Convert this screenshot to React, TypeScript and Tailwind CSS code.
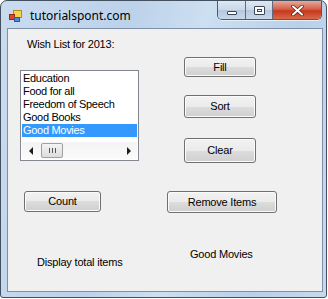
const wishes = ["Education", "Food for all", "Freedom of Speech", "Good Books", "Good Movies"];
const selected = "Good Movies";

const FormIcon = () => (
  <svg width={13} height={12} viewBox="0 0 13 12" aria-hidden="true">
    <rect x="4.5" y="0.5" width="8" height="7" fill="#f6d44a" stroke="#b88a1a" />
    <rect x="0.5" y="4.5" width="5" height="5" fill="#e0452c" stroke="#9a2a18" />
    <rect x="5.5" y="7.5" width="5" height="4" fill="#4f86d6" stroke="#2c5a9e" />
  </svg>
);

const CaptionButtons = () => (
  <div className="flex h-[19px] overflow-hidden rounded-b-[5px] border border-t-0 border-[#4b5a6e] shadow-[0_1px_0_#e6eef8]">
    <div className="flex w-[28px] items-center justify-center border-r border-[#5d6c80] bg-[linear-gradient(to_bottom,#dfe8f3_0%,#c9d7e8_50%,#b5c7dd_50%,#c8d8ea_100%)]">
      <span className="mt-[5px] h-[4px] w-[10px] rounded-[1px] border border-[#3a4556] bg-white" />
    </div>
    <div className="flex w-[27px] items-center justify-center border-r border-[#5d6c80] bg-[linear-gradient(to_bottom,#dfe8f3_0%,#c9d7e8_50%,#b5c7dd_50%,#c8d8ea_100%)]">
      <span className="flex h-[9px] w-[11px] items-center justify-center rounded-[1px] border border-[#3a4556] bg-white">
        <span className="h-[3px] w-[5px] border border-[#3a4556]" />
      </span>
    </div>
    <div className="flex w-[48px] items-center justify-center bg-[linear-gradient(to_bottom,#e9a99a_0%,#d7604a_45%,#c7381c_55%,#d9694a_100%)]">
      <svg width={13} height={11} viewBox="0 0 13 11" aria-hidden="true">
        <path d="M2 1.5l9 8M11 1.5l-9 8" stroke="#5a1d10" strokeWidth={3.4} strokeLinecap="round" />
        <path d="M2 1.5l9 8M11 1.5l-9 8" stroke="#ffffff" strokeWidth={2} strokeLinecap="round" />
      </svg>
    </div>
  </div>
);

const WinButton = ({ label, className }: { label: string; className: string }) => (
  <button
    type="button"
    className={`flex items-center justify-center rounded-[3px] border border-[#707070] bg-[linear-gradient(to_bottom,#f2f2f2_0%,#ebebeb_50%,#dddddd_50%,#cfcfcf_100%)] text-[11px] tracking-[-0.2px] text-black shadow-[inset_0_0_0_1px_#fbfbfb] ${className}`}
  >
    {label}
  </button>
);

const ListBox = () => (
  <div className="flex h-[91px] w-[119px] flex-col border border-[#828790] bg-white p-[1px]">
    <div className="flex flex-col">
      {wishes.map((w) => (
        <div
          key={w}
          className={`h-[13px] whitespace-nowrap pl-[1px] text-[11px] leading-[13px] tracking-[-0.3px] ${
            w === selected ? "bg-[#3399ff] text-white" : "text-black"
          }`}
        >
          {w}
        </div>
      ))}
    </div>
    <div className="mt-auto flex h-[17px] items-center bg-[linear-gradient(to_bottom,#f3f3f3,#fbfbfb)]">
      <div className="flex h-[17px] w-[17px] items-center justify-center">
        <span className="h-0 w-0 border-y-[4px] border-r-[4px] border-y-transparent border-r-[#1e1e1e]" />
      </div>
      <div className="ml-[2px] flex h-[15px] w-[22px] items-center justify-center gap-[2px] rounded-[2px] border border-[#a0a0a0] bg-[linear-gradient(to_bottom,#f4f4f4,#dcdcdc)]">
        <span className="h-[5px] w-px bg-[#555]" />
        <span className="h-[5px] w-px bg-[#555]" />
        <span className="h-[5px] w-px bg-[#555]" />
      </div>
      <div className="ml-auto flex h-[17px] w-[17px] items-center justify-center">
        <span className="h-0 w-0 border-y-[4px] border-l-[4px] border-y-transparent border-l-[#1e1e1e]" />
      </div>
    </div>
  </div>
);

export default function App() {
  return (
    <div className="h-[299px] w-[328px] bg-white font-['Liberation_Sans',Arial,sans-serif]">
      <div className="flex h-[298px] w-[327px] flex-col rounded-t-[7px] rounded-b-[3px] border border-[#43505f] bg-[linear-gradient(100deg,#c9dbef_0%,#bcd2ea_35%,#cddff1_55%,#b9d0e9_80%,#c6d9ee_100%)]">
        <div className="flex h-[27px] items-start">
          <div className="flex items-center gap-[8px] pl-[8px] pt-[7px]">
            <FormIcon />
            <span className="font-['Noto_Sans',sans-serif] text-[12px] leading-[16px] text-black">tutorialspont.com</span>
          </div>
          <div className="ml-auto mr-[4px]">
            <CaptionButtons />
          </div>
        </div>

        <div className="ml-[6px] h-[264px] w-[316px] border border-[#7d90a8] bg-[#f0f0f0] text-black">
          <div className="flex h-[135px]">
            <div className="flex w-[176px] flex-col pl-[12px] pt-[9px]">
              <div className="pl-[7px] text-[11px] leading-[13px] tracking-[-0.2px]">Wish List for 2013:</div>
              <div className="mt-[19px]">
                <ListBox />
              </div>
            </div>
            <div className="flex flex-col pt-[28px]">
              <WinButton label="Fill" className="h-[20px] w-[72px]" />
              <WinButton label="Sort" className="mt-[18px] h-[23px] w-[72px]" />
              <WinButton label="Clear" className="mt-[20px] h-[25px] w-[72px]" />
            </div>
          </div>

          <div className="mt-[27px] flex items-start pl-[16px]">
            <WinButton label="Count" className="h-[21px] w-[77px]" />
            <WinButton label="Remove Items" className="ml-[66px] h-[22px] w-[110px]" />
          </div>

          <div className="mt-[35px] flex items-start text-[11px] leading-[13px] tracking-[-0.2px]">
            <div className="w-[182px] pl-[29px] pt-[8px]">Display total items</div>
            <div>Good Movies</div>
          </div>
        </div>
      </div>
    </div>
  );
}
